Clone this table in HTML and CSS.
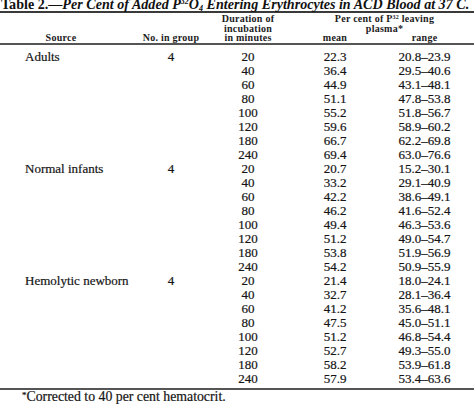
FILE: index.html
```html
<!DOCTYPE html>
<html>
<head>
<meta charset="utf-8">
<link rel="stylesheet" href="styles.css">
</head>
<body>
<div class="page">
  <div class="title"><b>Table 2.—</b><em>Per Cent of Added P<sup>32</sup>O<sub>4</sub> Entering Erythrocytes in ACD Blood at 37 C.</em></div>
  <div class="rule rule-top"></div>
  <div class="head">
    <div class="h c3 r1">Duration of</div>
    <div class="h c3 r2">incubation</div>
    <div class="h c3 r3">in minutes</div>
    <div class="h c1 r3">Source</div>
    <div class="h c2 r3">No. in group</div>
    <div class="h c56 r1">Per cent of P<sup>32</sup> leaving</div>
    <div class="h c56 r2">plasma*</div>
    <div class="h c5 r3">mean</div>
    <div class="h c6 r3">range</div>
  </div>
  <div class="rule rule-mid"></div>
  <div class="body">
    <div class="row"><span class="src">Adults</span><span>4</span><span>20</span><i></i><span>22.3</span><span>20.8–23.9</span></div>
    <div class="row"><span class="src"></span><span></span><span>40</span><i></i><span>36.4</span><span>29.5–40.6</span></div>
    <div class="row"><span class="src"></span><span></span><span>60</span><i></i><span>44.9</span><span>43.1–48.1</span></div>
    <div class="row"><span class="src"></span><span></span><span>80</span><i></i><span>51.1</span><span>47.8–53.8</span></div>
    <div class="row"><span class="src"></span><span></span><span>100</span><i></i><span>55.2</span><span>51.8–56.7</span></div>
    <div class="row"><span class="src"></span><span></span><span>120</span><i></i><span>59.6</span><span>58.9–60.2</span></div>
    <div class="row"><span class="src"></span><span></span><span>180</span><i></i><span>66.7</span><span>62.2–69.8</span></div>
    <div class="row"><span class="src"></span><span></span><span>240</span><i></i><span>69.4</span><span>63.0–76.6</span></div>
    <div class="row"><span class="src">Normal infants</span><span>4</span><span>20</span><i></i><span>20.7</span><span>15.2–30.1</span></div>
    <div class="row"><span class="src"></span><span></span><span>40</span><i></i><span>33.2</span><span>29.1–40.9</span></div>
    <div class="row"><span class="src"></span><span></span><span>60</span><i></i><span>42.2</span><span>38.6–49.1</span></div>
    <div class="row"><span class="src"></span><span></span><span>80</span><i></i><span>46.2</span><span>41.6–52.4</span></div>
    <div class="row"><span class="src"></span><span></span><span>100</span><i></i><span>49.4</span><span>46.3–53.6</span></div>
    <div class="row"><span class="src"></span><span></span><span>120</span><i></i><span>51.2</span><span>49.0–54.7</span></div>
    <div class="row"><span class="src"></span><span></span><span>180</span><i></i><span>53.8</span><span>51.9–56.9</span></div>
    <div class="row"><span class="src"></span><span></span><span>240</span><i></i><span>54.2</span><span>50.9–55.9</span></div>
    <div class="row"><span class="src">Hemolytic newborn</span><span>4</span><span>20</span><i></i><span>21.4</span><span>18.0–24.1</span></div>
    <div class="row"><span class="src"></span><span></span><span>40</span><i></i><span>32.7</span><span>28.1–36.4</span></div>
    <div class="row"><span class="src"></span><span></span><span>60</span><i></i><span>41.2</span><span>35.6–48.1</span></div>
    <div class="row"><span class="src"></span><span></span><span>80</span><i></i><span>47.5</span><span>45.0–51.1</span></div>
    <div class="row"><span class="src"></span><span></span><span>100</span><i></i><span>51.2</span><span>46.8–54.4</span></div>
    <div class="row"><span class="src"></span><span></span><span>120</span><i></i><span>52.7</span><span>49.3–55.0</span></div>
    <div class="row"><span class="src"></span><span></span><span>180</span><i></i><span>58.2</span><span>53.9–61.8</span></div>
    <div class="row"><span class="src"></span><span></span><span>240</span><i></i><span>57.9</span><span>53.4–63.6</span></div>
  </div>
  <div class="rule rule-bot"></div>
  <div class="note"><span class="ast">*</span>Corrected to 40 per cent hematocrit.</div>
</div>
</body>
</html>
```
FILE: styles.css
```css
html, body {
  margin: 0;
  padding: 0;
  background: #fff;
}
body {
  width: 474px;
  height: 404px;
  overflow: hidden;
  font-family: "Liberation Serif", "Times New Roman", serif;
  color: #141414;
}
.page {
  width: 474px;
}
.title {
  font-size: 14.1px;
  line-height: 11px;
  height: 11px;
  margin-top: -1px;
  white-space: nowrap;
  font-weight: bold;
  padding-left: 1px;
  color: #111;
}
.title em {
  font-style: italic;
  font-weight: bold;
}
.title sup {
  font-size: 8px;
  vertical-align: 5px;
  line-height: 0;
}
.title sub {
  font-size: 8px;
  vertical-align: -2px;
  line-height: 0;
}
.rule {
  background: #3a3a3a;
}
.rule-top {
  margin-top: 1px;
  height: 1.5px;
}
.rule-mid {
  height: 2px;
  background: #555;
}
.rule-bot {
  margin-top: 2px;
  height: 2px;
  background: #555;
}
.head,
.row {
  display: grid;
  grid-template-columns: 122px 98px 56px 19px 80px 99px;
}
.head {
  padding-top: 1.5px;
  padding-bottom: 0.5px;
  grid-template-rows: 9.5px 9.5px 9.5px;
  font-size: 10px;
  font-weight: bold;
  letter-spacing: 0.25px;
  line-height: 9.5px;
  color: #1c1c1c;
}
.h {
  justify-self: center;
  white-space: nowrap;
}
.h sup {
  font-size: 6px;
  vertical-align: 3px;
  line-height: 0;
}
.c1 { grid-column: 1; }
.c2 { grid-column: 2; }
.c3 { grid-column: 3; }
.c5 { grid-column: 5; }
.c6 { grid-column: 6; }
.c56 { grid-column: 5 / 7; }
.r1 { grid-row: 1; }
.r2 { grid-row: 2; }
.r3 { grid-row: 3; }
.body {
  padding-top: 4.5px;
  font-size: 13px;
  line-height: 14px;
  -webkit-text-stroke: 0.2px #141414;
}
.row {
  height: 14px;
}
.row span {
  text-align: center;
  white-space: nowrap;
}
.row span.src {
  text-align: left;
  padding-left: 25px;
}
.note {
  font-size: 13.8px;
  line-height: 14px;
  padding-left: 22px;
  white-space: nowrap;
  -webkit-text-stroke: 0.2px #141414;
}
.ast {
  font-size: 9px;
  vertical-align: 3px;
  line-height: 0;
}
```
